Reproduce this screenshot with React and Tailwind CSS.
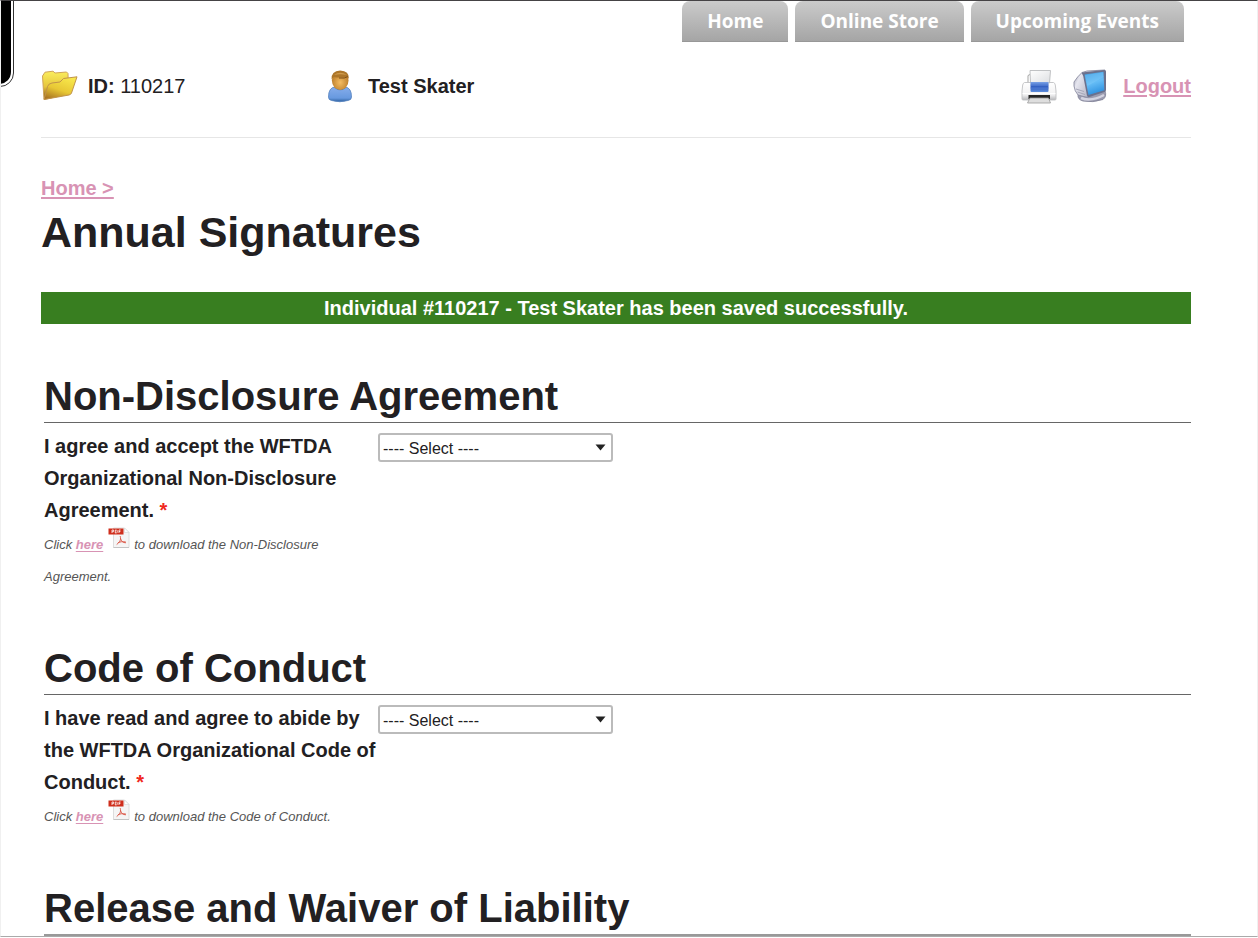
import React from "react";

function FolderIcon() {
  return (
    <svg width="38" height="32" viewBox="0 0 38 32" aria-hidden="true">
      <defs>
        <linearGradient id="folderBack" x1="0" y1="0" x2="0" y2="1">
          <stop offset="0" stopColor="#fbee5e" />
          <stop offset="0.55" stopColor="#e6c63c" />
          <stop offset="1" stopColor="#7d4a12" />
        </linearGradient>
        <linearGradient id="folderFront" x1="0.7" y1="0" x2="0.2" y2="1">
          <stop offset="0" stopColor="#f8e84c" />
          <stop offset="0.55" stopColor="#e8c835" />
          <stop offset="1" stopColor="#a87322" />
        </linearGradient>
      </defs>
      <path d="M1.5 6 L4 2.2 L12 1.2 L14 3 L25.500 2 L27 3.500 L27.500 24 L3 29.500 Z" fill="url(#folderBack)" stroke="#d0a458" strokeWidth="1" strokeLinejoin="round" />
      <path d="M3 29.500 L6.500 16.500 Q7.500 13.500 11 13 L19 12 L22.500 8.500 L36 6.800 L30.500 23 Q30 24.500 28 25 Z" fill="url(#folderFront)" stroke="#c1934a" strokeWidth="1" strokeLinejoin="round" />
    </svg>
  );
}

function PersonIcon() {
  return (
    <svg width="26" height="34" viewBox="0 0 26 34" aria-hidden="true">
      <defs>
        <radialGradient id="face" cx="0.5" cy="0.6" r="0.55">
          <stop offset="0" stopColor="#f5bd62" />
          <stop offset="1" stopColor="#bb7d2a" />
        </radialGradient>
        <linearGradient id="shirt" x1="0" y1="0" x2="0" y2="1">
          <stop offset="0" stopColor="#86adeb" />
          <stop offset="0.75" stopColor="#6799df" />
          <stop offset="1" stopColor="#2c5f9f" />
        </linearGradient>
      </defs>
      <path d="M1.500 28 Q1.500 18.500 8 18 L18.500 18 Q24.500 19 24.500 28 Q24.500 31 21 31.500 Q13 34 4.500 31.500 Q1.500 31 1.500 28Z" fill="url(#shirt)" stroke="#5481be" strokeWidth="0.800" />
      <path d="M7 18.500 Q13 24 19.500 18.500Z" fill="#5d82ae" />
      <ellipse cx="13.200" cy="11.500" rx="8.300" ry="9.500" fill="url(#face)" />
      <path d="M4.600 10.500 Q4 1.800 13.200 1.500 Q22.300 1.800 22 10 L20.600 8 Q13 9 6.500 8Z" fill="#ad7629" />
      <path d="M7 6 Q13 1.500 20 6 Q13 4.500 7 6Z" fill="#d09b4c" />
      <path d="M12 9 Q18 9.800 20.800 7.600" fill="none" stroke="#7d4f17" strokeWidth="1" />
    </svg>
  );
}

function PrinterIcon() {
  return (
    <svg width="36" height="36" viewBox="0 0 36 36" aria-hidden="true">
      <defs>
        <linearGradient id="paper" x1="0" y1="0" x2="1" y2="1">
          <stop offset="0" stopColor="#ffffff" />
          <stop offset="1" stopColor="#dddfe2" />
        </linearGradient>
        <linearGradient id="printerBlue" x1="0" y1="0" x2="0" y2="1">
          <stop offset="0" stopColor="#7ba3e8" />
          <stop offset="0.5" stopColor="#2c59bd" />
          <stop offset="1" stopColor="#5f8fdd" />
        </linearGradient>
        <linearGradient id="printerBody" x1="0" y1="0" x2="0" y2="1">
          <stop offset="0" stopColor="#ffffff" />
          <stop offset="0.7" stopColor="#f1f1f2" />
          <stop offset="1" stopColor="#b5b6b9" />
        </linearGradient>
      </defs>
      <path d="M9 6.500 L7 7.500 V15" fill="none" stroke="#a5a5a5" strokeWidth="1" />
      <path d="M3.500 14.500 H32.500 Q34 15 34.300 17 L35 23 V31 Q35 32 34 32 H2 Q1 32 1 31 V23 L1.700 17 Q2 15 3.500 14.500Z" fill="url(#printerBody)" stroke="#c0c1c3" strokeWidth="0.900" />
      <path d="M9 2.500 H29.500 L28.500 15 H9.500Z" fill="url(#paper)" stroke="#b9bbbd" strokeWidth="0.900" />
      <path d="M9.500 14 H27.500 V23 Q27.500 24 26.500 24 H10.500 Q9.500 24 9.500 23Z" fill="url(#printerBlue)" />
      <path d="M9.500 17 H27.500 M9.500 20 H27.500" stroke="#5d87dc" strokeWidth="0.700" />
      <path d="M1.500 25.500 H34.500" stroke="#fff" strokeWidth="1" />
      <rect x="7.500" y="27" width="21.500" height="4" fill="#252525" />
      <path d="M9 30 H27.500 L29.500 35 H6.500Z" fill="#dedede" stroke="#9a9a9a" strokeWidth="0.800" />
    </svg>
  );
}

function ComputerIcon() {
  return (
    <svg width="34" height="34" viewBox="0 0 34 34" aria-hidden="true">
      <defs>
        <linearGradient id="monitorSide" x1="0" y1="0" x2="1" y2="0.4">
          <stop offset="0" stopColor="#8f90a5" />
          <stop offset="0.25" stopColor="#e6e6ef" />
          <stop offset="0.6" stopColor="#c2c2d0" />
          <stop offset="1" stopColor="#77788f" />
        </linearGradient>
        <linearGradient id="screen" x1="0" y1="0" x2="0.3" y2="1">
          <stop offset="0" stopColor="#3c9ae0" />
          <stop offset="0.55" stopColor="#66bdf6" />
          <stop offset="1" stopColor="#3395e2" />
        </linearGradient>
      </defs>
      <path d="M5 26 Q4.500 30.500 10 32 Q20 34 30 30.500 Q34 27.500 32 22 L12 22Z" fill="#9b9cb0" stroke="#7e7f94" strokeWidth="0.800" />
      <path d="M8 29 Q18 33 31 26" fill="none" stroke="#d3d3e0" strokeWidth="2.500" />
      <path d="M9 3.500 L14 2 L32 1 L20 26.500 L14.500 28.500 L5 26 Q1.500 22 1 17 V13 Q4.500 7.500 9 3.500Z" fill="url(#monitorSide)" stroke="#8b8ca1" strokeWidth="0.900" />
      <path d="M8.500 3.500 L31.500 1 Q33 1 33 2.500 L33 21 Q33 22.500 31.500 23 L16 28 Q14.300 28.200 14 26.500 L10.200 7Z" fill="#6b718d" />
      <path d="M11.500 5.500 L30.500 2.800 L31.300 21.300 L15.500 26Z" fill="url(#screen)" />
      <path d="M12 6 L30 3.500 L30.500 8 L14.500 17Z" fill="#8bd0fb" opacity="0.300" />
      <path d="M3 20 L11 22.500 M4.500 23 L12 25.500" stroke="#a6a7b9" strokeWidth="1" />
    </svg>
  );
}

function PdfIcon() {
  return (
    <svg className="mr-1 ml-[5px] inline-block align-baseline" width="22" height="22" viewBox="0 0 22 22" role="img" aria-label="PDF">
      <path d="M5.500 1 H16.500 L21 5.500 V20.500 H5.500Z" fill="#f5f5f5" stroke="#d5d5d5" strokeWidth="0.800" />
      <path d="M16.500 1 V5.500 H21Z" fill="#fff" stroke="#d5d5d5" strokeWidth="0.600" />
      <path d="M5.500 20.500 H21" stroke="#bcbcbc" strokeWidth="0.800" />
      <rect x="0.500" y="1.500" width="15" height="6" fill="#cf2e1c" />
      <path d="M4 6 V3 H5.600 V4.700 H4 M7.300 3 V6 H8.500 L9.200 5.300 V3.700 L8.500 3Z M11 6 V3 H12.600 M11 4.500 H12.400" fill="none" stroke="#fff" strokeWidth="0.800" />
      <path d="M12.300 9.500 C13.200 12.500 12 15 9 17.300 M12.500 11.500 C13.200 14.300 15 15.800 17.500 15.800 M10.300 15.600 C12.500 14.600 14.500 14.400 17.500 15" fill="none" stroke="#dc5b4b" strokeWidth="1" strokeLinecap="round" />
    </svg>
  );
}

const linkStyle = "font-bold text-[#d893b4] underline underline-offset-2";

function Section({ id, title, statement, document }) {
  return (
    <section className="ml-[3px]">
      <h2 className={`${statement ? "border-b border-[#666]" : "border-b-2 border-[#999]"} pb-1 text-[40px] leading-[44px] font-bold`}>
        {title}
      </h2>
      {statement && (
        <div className="flex items-start pt-[7px] pb-[53px]">
          <div className="w-[334px] shrink-0 leading-8">
            <label htmlFor={id} className="block text-xl leading-8 font-bold">
              {statement} <span className="text-[#f0281e]">*</span>
            </label>
            <p className="pt-px text-[13px] leading-8 text-[#555] italic">
              Click <a href="#download" className={linkStyle}>here</a>
              <PdfIcon />
              {`to download the ${document}.`}
            </p>
          </div>
          <div className="relative mt-[3px]">
            <select
              id={id}
              className="block h-[29px] w-[235px] appearance-none rounded-[3px] border-2 border-[#bbb] bg-white pt-[2px] pl-[3px] text-base leading-5"
            >
              <option>---- Select ----</option>
            </select>
            <svg className="pointer-events-none absolute top-[11px] right-[7px]" width="11" height="7" viewBox="0 0 11 7" aria-hidden="true">
              <path d="M0.500 0.500 H10.500 L5.500 6.500Z" fill="#222" />
            </svg>
          </div>
        </div>
      )}
    </section>
  );
}

const tabs = ["Home", "Online Store", "Upcoming Events"];

export default function App() {
  return (
    <div className="relative overflow-hidden border-x border-t border-b border-x-[#f0f0f0] border-t-[#454345] border-b-[#aaa] bg-white font-['Liberation_Sans',Arial,sans-serif] text-[#222022]">
      <div className="absolute -top-1 -left-2 h-[90px] w-[21px] rounded-br-[14px] border border-[#333] bg-white pr-[2px] pb-[2px]">
        <div className="h-full rounded-br-[12px] bg-black" />
      </div>

      <nav className="flex justify-end gap-[7px] pr-[73px] font-['Open_Sans','Noto_Sans',sans-serif]">
        {tabs.map((tab) => (
          <a
            key={tab}
            href="#tab"
            className="flex h-[41px] items-center rounded-t-lg border-b border-[#989898] bg-linear-to-b from-[#cbcbcb] to-[#a5a5a5] px-[25px] text-[19px] leading-6 font-bold text-white"
          >
            {tab}
          </a>
        ))}
      </nav>

      <div className="pr-[66px] pl-10">
        <header className="flex h-24 items-center border-b border-[#e6e6e6] pb-2 text-xl">
          <div className="flex w-[286px] items-center gap-[9px]">
            <FolderIcon />
            <span><b>ID:</b> 110217</span>
          </div>
          <div className="flex items-center gap-[15px]">
            <PersonIcon />
            <b>Test Skater</b>
          </div>
          <div className="ml-auto flex items-center gap-4">
            <PrinterIcon />
            <ComputerIcon />
            <a href="#logout" className={linkStyle}>Logout</a>
          </div>
        </header>

        <main>
          <div className="pt-[34px] text-xl leading-8">
            <a href="#home" className={linkStyle}>Home &gt;</a>
          </div>
          <h1 className="pt-1 text-[43px] leading-[48px] font-bold">Annual Signatures</h1>
          <div role="status" className="mt-9 mb-[50px] bg-[#387e20] text-center text-xl leading-8 font-bold text-white">
            Individual #110217 - Test Skater has been saved successfully.
          </div>

          <Section
            id="nda"
            title="Non-Disclosure Agreement"
            statement="I agree and accept the WFTDA Organizational Non-Disclosure Agreement."
            document="Non-Disclosure Agreement"
          />
          <Section
            id="conduct"
            title="Code of Conduct"
            statement="I have read and agree to abide by the WFTDA Organizational Code of Conduct."
            document="Code of Conduct"
          />
          <Section id="waiver" title="Release and Waiver of Liability" />
        </main>
      </div>
    </div>
  );
}
